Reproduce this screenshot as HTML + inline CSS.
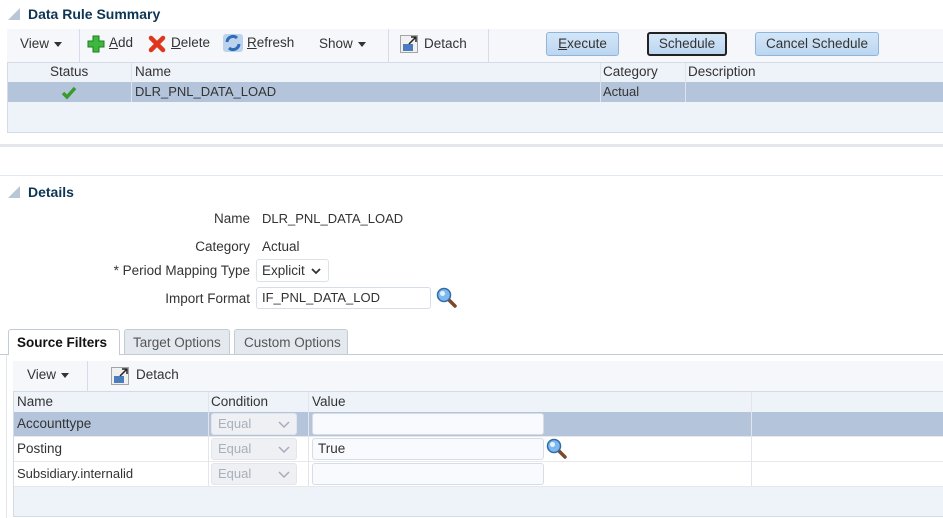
<!DOCTYPE html>
<html><head><meta charset="utf-8"><style>
*{margin:0;padding:0;box-sizing:border-box}
body{width:943px;height:518px;overflow:hidden;background:#fff;font-family:"Liberation Sans",Tahoma,sans-serif;font-size:13px;color:#333;position:relative}
.a{position:absolute;white-space:nowrap}
.tri{position:absolute;width:0;height:0;border-left:12px solid transparent;border-bottom:12px solid #b9c6d6}
.h{font-weight:bold;color:#0d3554;font-size:14px}
.vs{position:absolute;width:1px;background:#d6dde8}
.btn{position:absolute;height:24px;border:1px solid #8fb5da;border-radius:3px;background:linear-gradient(#d3e6f8,#bcd6f0);text-align:center;line-height:22px;color:#333;font-size:13.5px}
.caret{display:inline-block;border-left:4px solid transparent;border-right:4px solid transparent;border-top:5px solid #333;vertical-align:middle;margin-left:5px}
.sel{position:absolute;height:22px;border:1px solid #e2e6ec;border-radius:3px;background:#eef0f3;color:#a8b0bb;padding-left:6px;line-height:20px}
.inp{position:absolute;height:22px;border:1px solid #d6dde6;border-radius:3px;background:#f8fafd;padding-left:5px;line-height:20px;color:#333}
.t{font-size:13.5px}
</style></head><body>
<div class="tri" style="left:8px;top:8px"></div>
<div class="a h" style="left:28px;top:6px">Data Rule Summary</div>
<div class="a" style="left:7px;top:29px;width:936px;height:33px;background:#f5f7fb"></div>
<div class="vs" style="left:79px;top:29px;height:33px"></div>
<div class="vs" style="left:388px;top:29px;height:33px"></div>
<div class="vs" style="left:488px;top:29px;height:33px"></div>
<div class="a t" style="left:20px;top:36px">View<span class="caret"></span></div>
<svg class="a" style="left:87px;top:35px" width="18" height="18"><path d="M6 1h6v5h5v6h-5v5H6v-5H1V6h5z" fill="#3cb83c" stroke="#1e7d1e"/></svg>
<div class="a t" style="left:109px;top:35px"><u>A</u>dd</div>
<svg class="a" style="left:148px;top:35px" width="18" height="18"><path d="M3 3L15 15M15 3L3 15" stroke="#e0361b" stroke-width="4.5" stroke-linecap="round"/></svg>
<div class="a t" style="left:171px;top:35px"><u>D</u>elete</div>
<svg class="a" style="left:222px;top:33px" width="22" height="20"><rect x="1" y="1" width="20" height="18" rx="3" fill="#bcd3ee"/><path d="M5 9a6 6 0 0 1 10-4M17 11a6 6 0 0 1-10 4" stroke="#2f6cb5" stroke-width="3" fill="none"/></svg>
<div class="a t" style="left:247px;top:35px"><u>R</u>efresh</div>
<div class="a t" style="left:319px;top:36px">Show<span class="caret"></span></div>
<svg class="a" style="left:400px;top:35px" width="18" height="18"><rect x=".5" y=".5" width="17" height="17" fill="#f0f0f0" stroke="#555" stroke-dasharray="1 1"/><rect x="3" y="9" width="10" height="7" fill="#4a7cc0"/><path d="M9 9l7-7M11 2h5v5" stroke="#222" stroke-width="1.5" fill="none"/></svg>
<div class="a t" style="left:424px;top:36px">Detach</div>
<div class="btn" style="left:546px;top:32px;width:73px"><u>E</u>xecute</div>
<div class="btn" style="left:647px;top:32px;width:80px;border:2px solid #222;line-height:20px">Schedule</div>
<div class="btn" style="left:755px;top:32px;width:124px">Cancel Schedule</div>
<div class="a" style="left:7px;top:62px;width:936px;height:71px;background:#eef2f9;border-bottom:1px solid #d5dbe5;border-left:1px solid #d5dbe5;border-top:1px solid #d5dbe5"></div>
<div class="a" style="left:8px;top:82px;width:935px;height:20px;background:#b4c5db"></div>
<div class="vs" style="left:131px;top:63px;height:39px;background:#dde3ec"></div>
<div class="vs" style="left:600px;top:63px;height:39px;background:#dde3ec"></div>
<div class="vs" style="left:685px;top:63px;height:39px;background:#dde3ec"></div>
<div class="a t" style="left:50px;top:64px">Status</div>
<div class="a t" style="left:135px;top:64px">Name</div>
<div class="a t" style="left:603px;top:64px">Category</div>
<div class="a t" style="left:688px;top:64px">Description</div>
<svg class="a" style="left:61px;top:86px" width="16" height="14"><path d="M2 7l4 4 8-9" stroke="#3a9a2a" stroke-width="3.5" fill="none"/></svg>
<div class="a" style="left:135px;top:84px">DLR_PNL_DATA_LOAD</div>
<div class="a" style="left:603px;top:84px">Actual</div>
<div class="a" style="left:0;top:144px;width:943px;height:3px;background:#e3e6ea"></div>
<div class="a" style="left:0;top:175px;width:943px;height:1px;background:#e2e8f0"></div>
<div class="tri" style="left:8px;top:186px"></div>
<div class="a h" style="left:28px;top:184px">Details</div>
<div class="a t" style="right:693px;top:211px">Name</div>
<div class="a" style="left:262px;top:211px">DLR_PNL_DATA_LOAD</div>
<div class="a t" style="right:693px;top:239px">Category</div>
<div class="a t" style="left:262px;top:239px">Actual</div>
<div class="a t" style="right:693px;top:263px">* Period Mapping Type</div>
<div class="a t" style="left:256px;top:259px;width:73px;height:23px;border:1px solid #dde2e8;border-radius:3px;line-height:21px;padding-left:5px">Explicit <svg width="10" height="8" style="vertical-align:middle;margin-left:2px"><path d="M1 2l4 4 4-4" stroke="#333" stroke-width="1.8" fill="none"/></svg></div>
<div class="a t" style="right:693px;top:291px">Import Format</div>
<div class="inp" style="left:256px;top:287px;width:175px;height:22px;background:#fff">IF_PNL_DATA_LOD</div>
<svg class="a" style="left:436px;top:287px" width="21" height="21"><path d="M12 12l7 7" stroke="#7a4a2a" stroke-width="3.5" stroke-linecap="round"/><circle cx="8" cy="8" r="6.5" fill="#7fb8ee" stroke="#2f6ca8" stroke-width="1.5"/><circle cx="6.5" cy="6.5" r="2.5" fill="#e6f3ff"/></svg>
<div class="a" style="left:0;top:354px;width:943px;height:1px;background:#c3cbd6"></div>
<div class="a" style="left:8px;top:329px;width:112px;height:26px;background:#fff;border:1px solid #c3cbd6;border-bottom:none;border-radius:3px 3px 0 0;font-weight:bold;color:#111;padding:5px 0 0 8px;font-size:13.5px">Source Filters</div>
<div class="a t" style="left:124px;top:329px;width:106px;height:25px;background:#e4e9ef;border:1px solid #c3cbd6;border-bottom:none;border-radius:3px 3px 0 0;color:#555;padding:5px 0 0 8px">Target Options</div>
<div class="a t" style="left:234px;top:329px;width:114px;height:25px;background:#e4e9ef;border:1px solid #c3cbd6;border-bottom:none;border-radius:3px 3px 0 0;color:#555;padding:5px 0 0 9px">Custom Options</div>
<div class="a" style="left:6px;top:355px;width:1px;height:163px;background:#e2e6ec"></div>
<div class="a" style="left:13px;top:361px;width:930px;height:30px;background:#f5f7fb"></div>
<div class="vs" style="left:87px;top:361px;height:30px"></div>
<div class="a t" style="left:27px;top:367px">View<span class="caret"></span></div>
<svg class="a" style="left:111px;top:367px" width="18" height="18"><rect x=".5" y=".5" width="17" height="17" fill="#f0f0f0" stroke="#555" stroke-dasharray="1 1"/><rect x="3" y="9" width="10" height="7" fill="#4a7cc0"/><path d="M9 9l7-7M11 2h5v5" stroke="#222" stroke-width="1.5" fill="none"/></svg>
<div class="a t" style="left:136px;top:367px">Detach</div>
<div class="a" style="left:13px;top:391px;width:930px;height:126px;background:#eef2f9;border-top:1px solid #d5dbe5;border-bottom:1px solid #d5dbe5;border-left:1px solid #d5dbe5"></div>
<div class="a" style="left:14px;top:412px;width:929px;height:24px;background:#b4c5db"></div>
<div class="a" style="left:14px;top:437px;width:929px;height:24px;background:#fff"></div>
<div class="a" style="left:14px;top:462px;width:929px;height:24px;background:#fff"></div>
<div class="a" style="left:14px;top:436px;width:929px;height:1px;background:#e6e8ec"></div>
<div class="a" style="left:14px;top:461px;width:929px;height:1px;background:#e6e8ec"></div>
<div class="a" style="left:14px;top:486px;width:929px;height:1px;background:#e6e8ec"></div>
<div class="vs" style="left:208px;top:392px;height:94px;background:#e2e6ec"></div>
<div class="vs" style="left:308px;top:392px;height:94px;background:#e2e6ec"></div>
<div class="vs" style="left:751px;top:392px;height:94px;background:#e2e6ec"></div>
<div class="a t" style="left:17px;top:394px">Name</div>
<div class="a t" style="left:211px;top:394px">Condition</div>
<div class="a t" style="left:312px;top:394px">Value</div>
<div class="a t" style="left:17px;top:416px">Accounttype</div>
<div class="a t" style="left:17px;top:441px">Posting</div>
<div class="a" style="left:17px;top:466px">Subsidiary.internalid</div>
<div class="sel" style="left:211px;top:413px;width:86px">Equal<svg width="12" height="8" style="position:absolute;right:6px;top:7px"><path d="M1 1l5 5 5-5" stroke="#aab" stroke-width="1.5" fill="none"/></svg></div>
<div class="sel" style="left:211px;top:438px;width:86px">Equal<svg width="12" height="8" style="position:absolute;right:6px;top:7px"><path d="M1 1l5 5 5-5" stroke="#aab" stroke-width="1.5" fill="none"/></svg></div>
<div class="sel" style="left:211px;top:463px;width:86px">Equal<svg width="12" height="8" style="position:absolute;right:6px;top:7px"><path d="M1 1l5 5 5-5" stroke="#aab" stroke-width="1.5" fill="none"/></svg></div>
<div class="inp" style="left:312px;top:413px;width:232px"></div>
<div class="inp t" style="left:312px;top:438px;width:232px">True</div>
<div class="inp" style="left:312px;top:463px;width:232px"></div>
<svg class="a" style="left:546px;top:438px" width="21" height="21"><path d="M12 12l7 7" stroke="#7a4a2a" stroke-width="3.5" stroke-linecap="round"/><circle cx="8" cy="8" r="6.5" fill="#7fb8ee" stroke="#2f6ca8" stroke-width="1.5"/><circle cx="6.5" cy="6.5" r="2.5" fill="#e6f3ff"/></svg>
</body></html>
